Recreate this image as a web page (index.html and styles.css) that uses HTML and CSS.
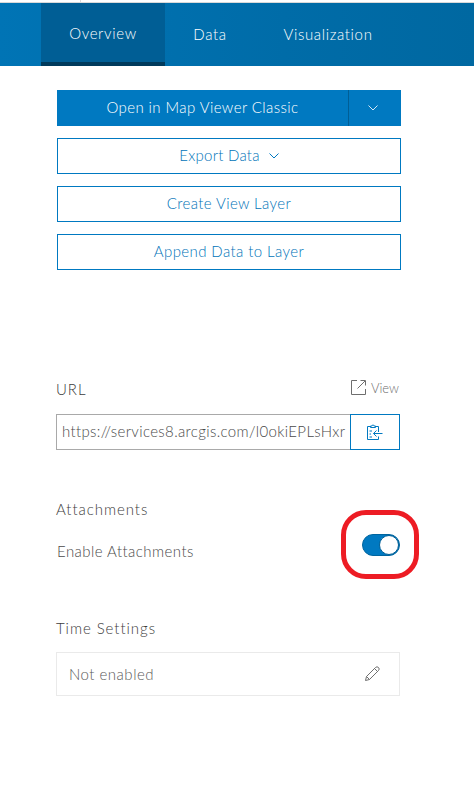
FILE: index.html
```html
<!DOCTYPE html>
<html lang="en">

<head>
    <meta charset="UTF-8">
    <meta name="viewport" content="width=device-width, initial-scale=1.0">
    <title>Overview</title>
    <link rel="stylesheet" href="styles.css">
</head>

<body>
    <div class="topStrip"><span class="topTick"></span></div>
    <nav class="tabBar">
        <a class="tab tabActive">Overview</a>
        <a class="tab">Data</a>
        <a class="tab">Visualization</a>
    </nav>

    <div class="content">
        <div class="actions">
            <div class="splitBtn">
                <a class="splitMain">Open in Map Viewer Classic</a>
                <a class="splitArrow">
                    <svg width="10" height="6" viewBox="0 0 10 6"><path d="M.5.5 5 5 9.500.5" fill="none" stroke="#d5e8f5" stroke-width="1"/></svg>
                </a>
            </div>
            <a class="btnOutline btnExport">Export Data
                <svg class="exportArrow" width="10" height="6" viewBox="0 0 10 6"><path d="M.5.5 5 5 9.500.5" fill="none" stroke="#0079c1" stroke-width="1"/></svg>
            </a>
            <a class="btnOutline">Create View Layer</a>
            <a class="btnOutline">Append Data to Layer</a>
        </div>

        <section class="urlSection">
            <div class="urlHead">
                <h3 class="label">URL</h3>
                <a class="viewLink">
                    <svg width="15" height="15" viewBox="0 0 15 15" fill="none" stroke="#6e6e6e" stroke-width="1"><path d="M6 .5H.5v14h14V9"/><path d="M6.500 8.500 14 1M9.500 .5h5v5"/></svg>
                    View
                </a>
            </div>
            <div class="urlRow">
                <div class="urlText">https://services8.arcgis.com/l0okiEPLsHxr</div>
                <a class="copyBtn">
                    <svg width="16" height="16" viewBox="0 0 16 16" fill="none" stroke="#0079c1" stroke-width="1"><path d="M3.500 2.500H.5v13h11V12.500M11.500 8V2.500H8.500"/><path d="M3.500 3.500v-1.500h1.500a1 1 0 0 1 2 0h1.500v1.500z"/><path d="M2.500 7H5M2.500 10H4M2.500 13H5"/><path d="M15.500 9.500H6.500M9.500 6.500 6.500 9.500 9.500 12.500"/></svg>
                </a>
            </div>
        </section>

        <section class="attachSection">
            <h3 class="label">Attachments</h3>
            <div class="attachRow">
                <span class="attachText">Enable Attachments</span>
                <span class="toggle"><span class="knob"></span></span>
                <span class="redRing"></span>
            </div>
        </section>

        <section class="timeSection">
            <h3 class="label">Time Settings</h3>
            <div class="timeBox">
                <span>Not enabled</span>
                <svg width="16" height="16" viewBox="0 0 16 16" fill="none" stroke="#6e6e6e" stroke-width="1"><path d="M1.500 14.500 2.500 10.500 11.500 1.500a1.500 1.500 0 0 1 3 3L5.500 13.500z"/><path d="M2.500 10.500 5.500 13.500M10.500 2.500 13.500 5.500"/></svg>
            </div>
        </section>
    </div>
</body>

</html>
```

FILE: styles.css
```css
body {
    margin: 0;
    background: #fff;
    font-family: "Lato", "Open Sans", sans-serif;
    font-weight: 300;
    color: #4a4a4a;
}
.topStrip {
    height: 2px;
    background: #fff;
    border-bottom: 1px solid #d9d9d9;
    position: relative;
}
.topTick {
    position: absolute;
    left: 80px;
    top: 0;
    width: 1px;
    height: 2px;
    background: #d9d9d9;
}
.tabBar {
    height: 63px;
    display: flex;
    padding-left: 41px;
    background: linear-gradient(90deg, #0074b5 0%, #006ca8 60%, #0068a1 100%);
}
.tab {
    display: flex;
    align-items: center;
    justify-content: center;
    font-size: 15px;
    letter-spacing: 0.65px;
    color: #fff;
    padding-bottom: 2px;
    box-sizing: border-box;
}
.tab:nth-child(1) {
    width: 124px;
}
.tab:nth-child(2) {
    width: 90px;
}
.tab:nth-child(3) {
    width: 146px;
}
.tabActive {
    background: #005e95;
    border-bottom: 4px solid #003a5c;
    padding-bottom: 0;
}
.content {
    padding: 24px 74px 0 56px;
}
.actions {
    display: flex;
    flex-direction: column;
    gap: 12px;
    margin: 0 -1px 0 1px;
}
.splitBtn {
    display: flex;
    height: 36px;
    background: #0079c1;
    color: #fff;
    font-size: 15px;
    letter-spacing: 0.42px;
}
.splitMain {
    flex: 1;
    display: flex;
    align-items: center;
    justify-content: center;
    padding-bottom: 2px;
}
.splitArrow {
    width: 53px;
    display: flex;
    align-items: center;
    justify-content: center;
    border-left: 1px solid #005e95;
    padding-right: 5px;
    box-sizing: border-box;
}
.btnOutline {
    height: 36px;
    box-sizing: border-box;
    border: 1px solid #0079c1;
    display: flex;
    align-items: center;
    justify-content: center;
    color: #0073b8;
    font-size: 15px;
    letter-spacing: 0.4px;
    padding-bottom: 2px;
}
.btnExport {
    letter-spacing: 0.25px;
}
.exportArrow {
    margin: 2px 0 0 9px;
}
.label {
    margin: 0;
    font-size: 15px;
    font-weight: 300;
    color: #3c3c3c;
    letter-spacing: 0.95px;
}
.urlSection {
    margin-top: 109px;
}
.urlHead {
    display: flex;
    justify-content: space-between;
    align-items: center;
    height: 20px;
}
.viewLink {
    display: flex;
    align-items: center;
    gap: 5px;
    font-size: 13px;
    color: #6e6e6e;
    margin-bottom: 3px;
    margin-right: 1px;
}
.urlRow {
    display: flex;
    height: 36px;
    margin-top: 15px;
}
.urlText {
    flex: 1;
    box-sizing: border-box;
    border: 1px solid #a9a9a9;
    border-right: 0;
    padding: 0 5px;
    font-size: 15px;
    line-height: 33px;
    color: #4a4a4a;
    white-space: nowrap;
    letter-spacing: 0.35px;
}
.copyBtn {
    width: 50px;
    box-sizing: border-box;
    border: 1px solid #0079c1;
    display: flex;
    align-items: center;
    justify-content: center;
}
.attachSection {
    margin-top: 50px;
}
.attachRow {
    position: relative;
    display: flex;
    justify-content: space-between;
    height: 38px;
    margin-top: 16px;
    padding-left: 1px;
}
.attachText {
    font-size: 15px;
    line-height: 20px;
    margin-top: 7px;
    letter-spacing: 0.45px;
}
.toggle {
    width: 38px;
    height: 22px;
    box-sizing: border-box;
    background: #0079c1;
    border-radius: 11px;
    border: 1px solid #00659f;
    display: flex;
    justify-content: flex-end;
}
.knob {
    width: 20px;
    height: 20px;
    box-sizing: border-box;
    background: #fff;
    border: 1px solid #005e95;
    border-radius: 50%;
}
.redRing {
    position: absolute;
    right: -19px;
    top: -24px;
    width: 78px;
    height: 69px;
    box-sizing: border-box;
    border: 5px solid #ed1c24;
    border-radius: 25px;
}
.timeSection {
    margin-top: 47px;
}
.timeBox {
    margin-top: 15px;
    height: 44px;
    box-sizing: border-box;
    border: 1px solid #eaeaea;
    display: flex;
    align-items: center;
    justify-content: space-between;
    padding: 0 19px 0 12px;
    font-size: 15px;
    color: #5a5a5a;
    letter-spacing: 0.5px;
}
```
